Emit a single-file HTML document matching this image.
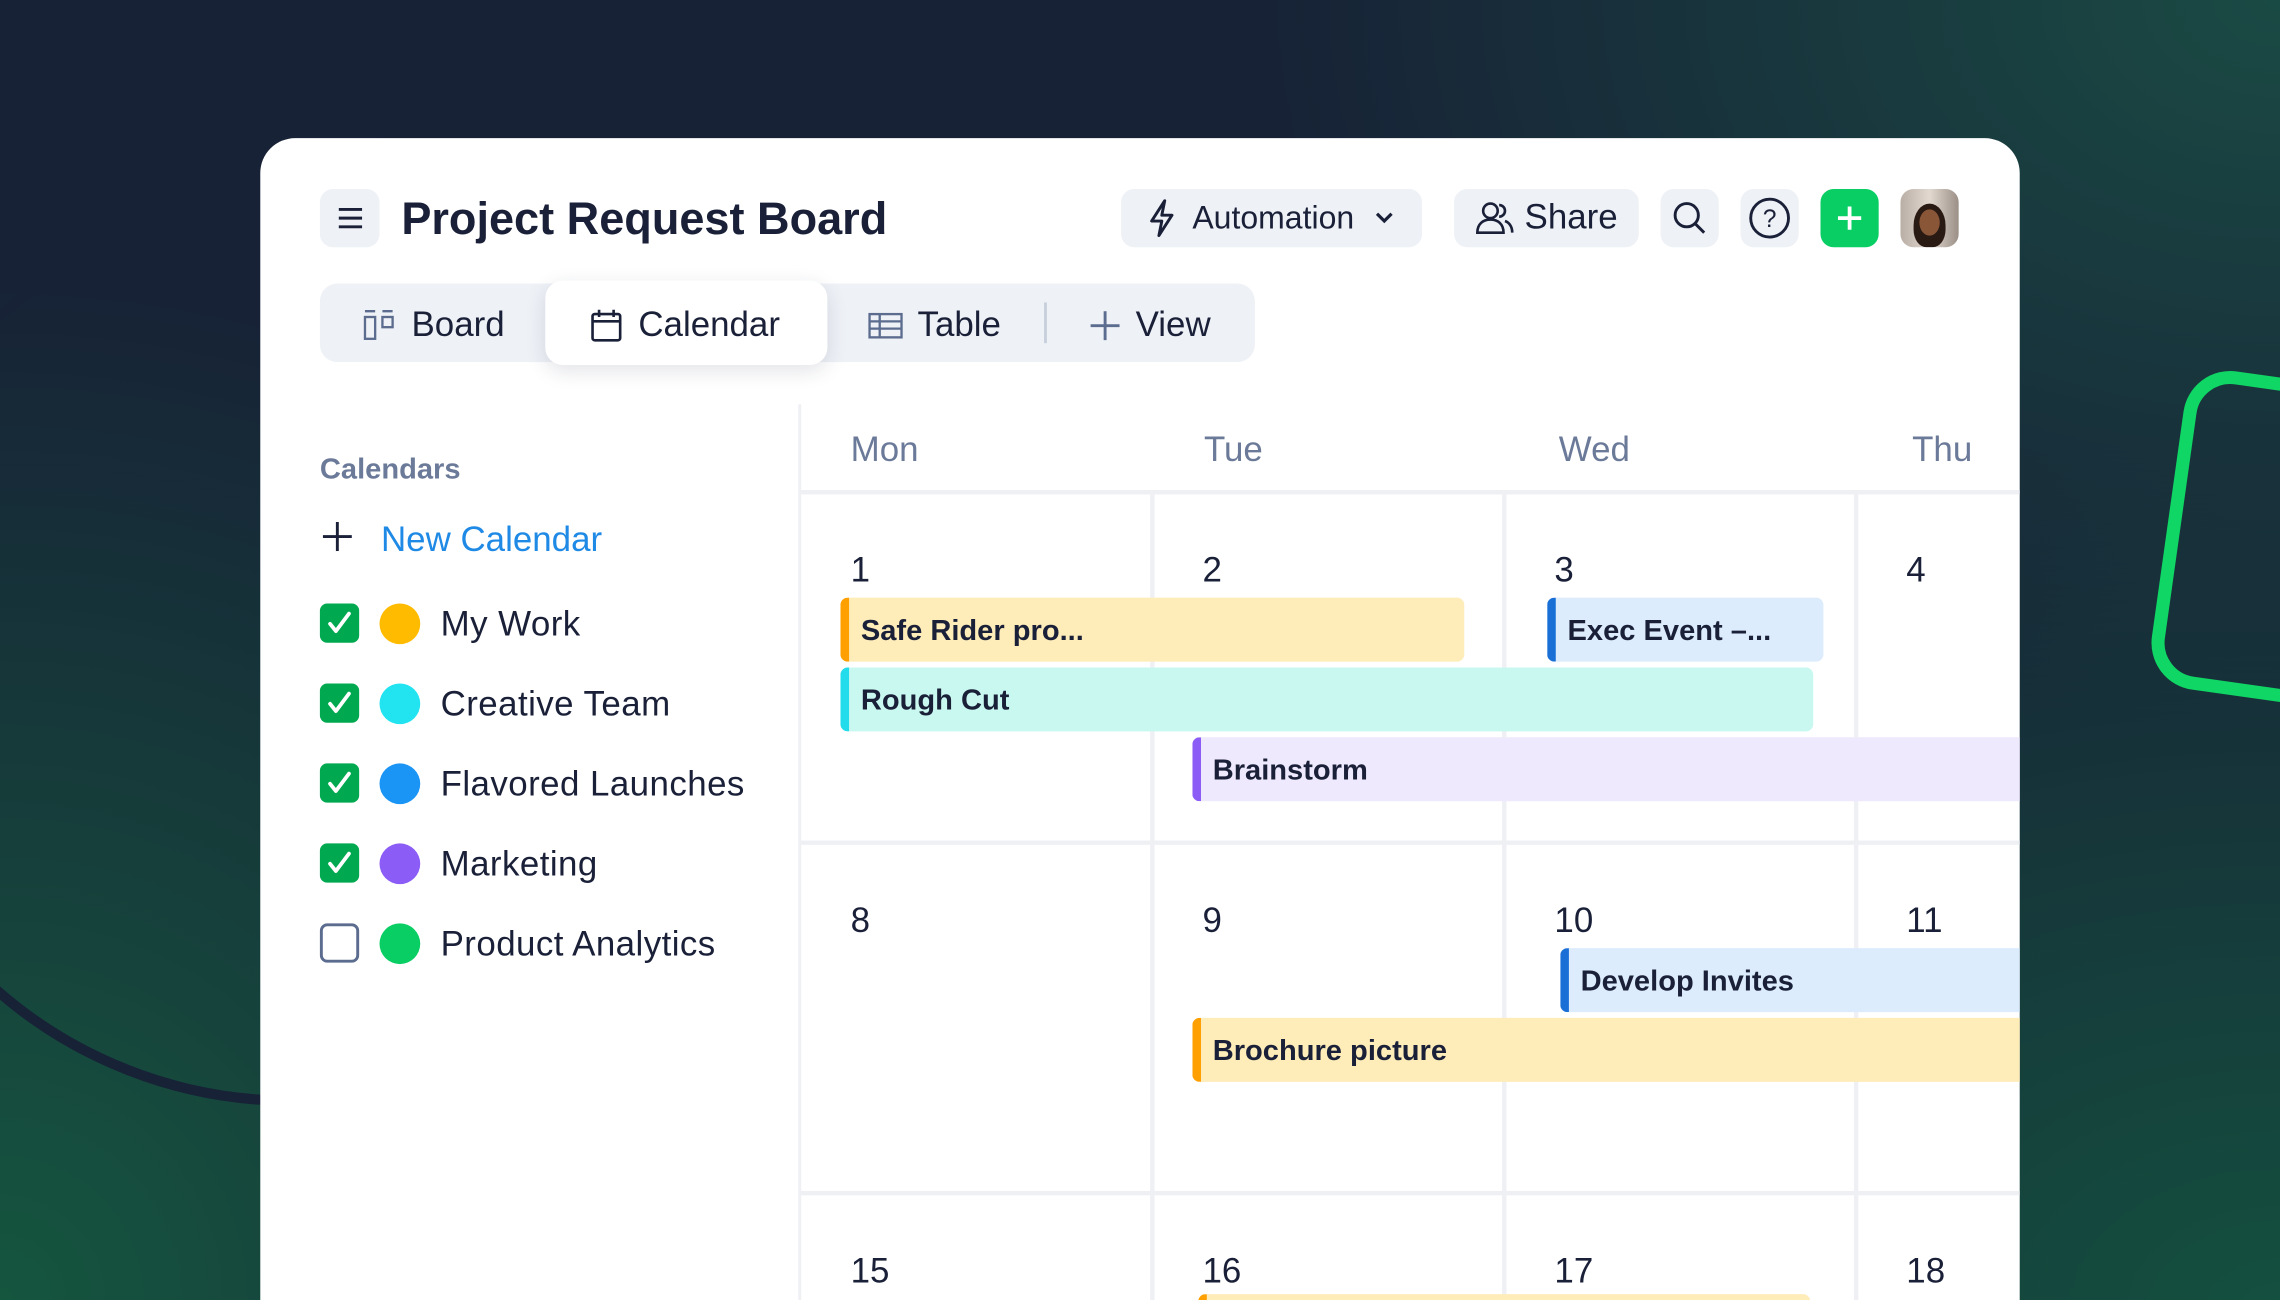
<!DOCTYPE html>
<html><head><meta charset="utf-8"><style>
*{margin:0;padding:0;box-sizing:border-box}
html,body{width:2280px;height:1300px;overflow:hidden}
body{background:#172236;font-family:"Liberation Sans",sans-serif;color:#1a2038}
#s{position:absolute;left:0;top:0;width:1568px;height:894px;transform:scale(1.45408,1.45414);transform-origin:0 0;overflow:hidden;
background:radial-gradient(ellipse 900px 600px at 1568px 900px,#14503f 0%,rgba(20,80,63,0) 100%),radial-gradient(ellipse 700px 700px at 0px 894px,#15563f 0%,rgba(21,86,63,0) 100%),radial-gradient(ellipse 700px 500px at 1568px 0px,#1a4a44 0%,rgba(26,74,68,0) 100%),#172236}
.a{position:absolute}
.card{left:179px;top:95px;width:1210px;height:799px;background:#fff;border-radius:24px 24px 0 0;overflow:hidden}
.btn{position:absolute;background:#eef1f6;border-radius:9px;height:40px;top:35px;display:flex;align-items:center;justify-content:center;font-size:22px;color:#1a2038}
.tabs{left:41px;top:100px;width:643px;height:54px;background:#eef1f6;border-radius:12px}
.tab{position:absolute;top:2px;height:54px;display:flex;align-items:center;font-size:24px;color:#1a2038}
.cb{position:absolute;left:41px;width:27px;height:27px;border-radius:5px;background:#00a84f}
.dot{position:absolute;left:82px;width:28px;height:28px;border-radius:50%}
.lbl{position:absolute;left:124px;font-size:24px;color:#1a2038;letter-spacing:.3px}
.vl{position:absolute;width:3px;background:#eef0f4}
.hl{position:absolute;height:3px;background:#eef0f4;left:371px;width:840px}
.dn{position:absolute;font-size:24px;color:#1a2038}
.dh{position:absolute;top:201px;font-size:24px;color:#6b7a99}
.ev{position:absolute;height:44px;border-radius:5px;border-left:6px solid;font-weight:bold;font-size:20px;display:flex;align-items:center;padding-left:8px;padding-top:3px;color:#1a2038;white-space:nowrap;overflow:hidden}
.y{background:#feecb9;border-color:#ff9f00}.b{background:#dcecfd;border-color:#1a6fd6}.c{background:#c9f8f0;border-color:#22dcec}.p{background:#efe9fd;border-color:#8b5cf6}
</style></head><body><div id="s">
<svg class="a" style="left:0;top:0" width="1568" height="894">
<circle cx="200" cy="450" r="307" fill="none" stroke="#172236" stroke-width="7"/>
<rect x="1510" y="256" width="260" height="212" rx="28" fill="none" stroke="#0fd664" stroke-width="9" transform="rotate(8 1510 256)"/>
</svg>
<div class="a card">
 <div class="btn" style="left:41px;width:41px"><svg width="20" height="16"><path d="M2 2h16M2 8h16M2 14h16" stroke="#1a2038" stroke-width="2"/></svg></div>
 <div class="a" style="left:97px;top:38px;font-size:31px;font-weight:bold;letter-spacing:0px">Project Request Board</div>
 <div class="btn" style="left:592px;width:207px;justify-content:flex-start;padding-left:18px"><svg width="20" height="26" style="margin-right:11px"><path d="M12 1L3 15h7l-2 10 9-14h-7z" fill="none" stroke="#1a2038" stroke-width="2" stroke-linejoin="round"/></svg>Automation<svg width="14" height="10" style="margin-left:14px"><path d="M2 2l5 5 5-5" fill="none" stroke="#1a2038" stroke-width="2.2"/></svg></div>
 <div class="btn" style="left:821px;width:127px;font-size:24px"><svg width="28" height="24" style="margin-right:6px"><circle cx="11" cy="7" r="5" fill="none" stroke="#1a2038" stroke-width="1.8"/><path d="M2 22c0-6 4-9 9-9s9 3 9 9zM17 3a4 4 0 0 1 0 8M21 14c3 1 5 4 5 8" fill="none" stroke="#1a2038" stroke-width="1.8"/></svg>Share</div>
 <div class="btn" style="left:963px;width:40px"><svg width="26" height="26"><circle cx="11" cy="11" r="8" fill="none" stroke="#1a2038" stroke-width="2"/><path d="M17 17l6 6" stroke="#1a2038" stroke-width="2"/></svg></div>
 <div class="btn" style="left:1018px;width:40px"><svg width="30" height="30"><circle cx="15" cy="15" r="13" fill="none" stroke="#1a2038" stroke-width="2"/><text x="15" y="21" font-size="17" text-anchor="middle" fill="#1a2038" font-family="Liberation Sans">?</text></svg></div>
 <div class="btn" style="left:1073px;width:40px;background:#08ce63"><svg width="20" height="20"><path d="M10 2v16M2 10h16" stroke="#fff" stroke-width="2.6"/></svg></div>
 <div class="btn" style="left:1128px;width:40px;background:linear-gradient(90deg,#b9aea5,#e2d9d0 50%,#9b8f86);overflow:hidden"><div style="width:22px;height:30px;border-radius:50% 50% 40% 40%;background:#2a1a14;margin-top:10px;position:relative"><div style="position:absolute;left:4px;top:4px;width:14px;height:18px;border-radius:50%;background:#8a5638"></div></div></div>
 <div class="a tabs">
  <div class="tab" style="left:30px"><svg width="22" height="22" style="margin-right:11px"><rect x="1" y="5" width="7" height="15" fill="none" stroke="#5b6c8f" stroke-width="1.6"/><rect x="13" y="5" width="7" height="7" fill="none" stroke="#5b6c8f" stroke-width="1.6"/><path d="M1 1h7M13 1h7" stroke="#5b6c8f" stroke-width="1.6"/></svg>Board</div>
  <div class="a" style="left:155px;top:-2px;width:194px;height:58px;background:#fff;border-radius:12px;box-shadow:0 4px 14px rgba(30,40,70,.13)"></div>
  <div class="tab" style="left:186px"><svg width="22" height="24" style="margin-right:11px"><rect x="1.5" y="4" width="19" height="18" rx="1.5" fill="none" stroke="#1a2038" stroke-width="1.8"/><path d="M1.5 9h19M6 1v5M16 1v5" stroke="#1a2038" stroke-width="1.8"/></svg>Calendar</div>
  <div class="tab" style="left:377px"><svg width="24" height="20" style="margin-right:10px"><rect x="1" y="2" width="22" height="16" fill="none" stroke="#5b6c8f" stroke-width="1.6"/><path d="M1 7h22M1 12h22M8 2v16" stroke="#5b6c8f" stroke-width="1.6"/></svg>Table</div>
  <div class="a" style="left:498px;top:13px;width:2px;height:28px;background:#c8d0dd"></div>
  <div class="tab" style="left:530px"><svg width="20" height="20" style="margin-right:11px"><path d="M10 0v20M0 10h20" stroke="#5b6c8f" stroke-width="2"/></svg>View</div>
 </div>
 <div class="a" style="left:41px;top:217px;font-size:20px;font-weight:bold;color:#6b7a99">Calendars</div>
 <svg class="a" style="left:43px;top:264px" width="20" height="20"><path d="M10 0v20M0 10h20" stroke="#1a2038" stroke-width="2"/></svg>
 <div class="a" style="left:83px;top:263px;font-size:24px;color:#1f8ae6">New Calendar</div>
 <div class="cb" style="top:320px"></div><div class="dot" style="top:320px;background:#ffbb00"></div><div class="lbl" style="top:321px">My Work</div>
 <div class="cb" style="top:375px"></div><div class="dot" style="top:375px;background:#22e4f0"></div><div class="lbl" style="top:376px">Creative Team</div>
 <div class="cb" style="top:430px"></div><div class="dot" style="top:430px;background:#1a95f5"></div><div class="lbl" style="top:431px">Flavored Launches</div>
 <div class="cb" style="top:485px"></div><div class="dot" style="top:485px;background:#8b5cf6"></div><div class="lbl" style="top:486px">Marketing</div>
 <div class="cb" style="top:540px;background:#fff;border:2px solid #5b6c8f"></div><div class="dot" style="top:540px;background:#08ce63"></div><div class="lbl" style="top:541px">Product Analytics</div>
 <svg class="a" style="left:41px;top:320px" width="27" height="200"><g fill="none" stroke="#fff" stroke-width="2.6" stroke-linecap="round" stroke-linejoin="round"><path d="M7 14l4 5 9-12"/><path d="M7 69l4 5 9-12"/><path d="M7 124l4 5 9-12"/><path d="M7 179l4 5 9-12"/></g></svg>
 <div class="vl" style="left:370px;top:183px;height:700px;width:2px"></div>
 <div class="dh" style="left:406px">Mon</div><div class="dh" style="left:649px">Tue</div><div class="dh" style="left:893px">Wed</div><div class="dh" style="left:1136px">Thu</div>
 <div class="hl" style="top:242px"></div><div class="hl" style="top:483px"></div><div class="hl" style="top:724px"></div>
 <div class="vl" style="left:612px;top:245px;height:600px"></div><div class="vl" style="left:854px;top:245px;height:600px"></div><div class="vl" style="left:1096px;top:245px;height:600px"></div>
 <div class="dn" style="left:406px;top:284px">1</div><div class="dn" style="left:648px;top:284px">2</div><div class="dn" style="left:890px;top:284px">3</div><div class="dn" style="left:1132px;top:284px">4</div>
 <div class="dn" style="left:406px;top:525px">8</div><div class="dn" style="left:648px;top:525px">9</div><div class="dn" style="left:890px;top:525px">10</div><div class="dn" style="left:1132px;top:525px">11</div>
 <div class="dn" style="left:406px;top:766px">15</div><div class="dn" style="left:648px;top:766px">16</div><div class="dn" style="left:890px;top:766px">17</div><div class="dn" style="left:1132px;top:766px">18</div>
 <div class="ev y" style="left:399px;top:316px;width:429px">Safe Rider pro...</div>
 <div class="ev b" style="left:885px;top:316px;width:190px">Exec Event –...</div>
 <div class="ev c" style="left:399px;top:364px;width:669px">Rough Cut</div>
 <div class="ev p" style="left:641px;top:412px;width:580px">Brainstorm</div>
 <div class="ev b" style="left:894px;top:557px;width:330px">Develop Invites</div>
 <div class="ev y" style="left:641px;top:605px;width:580px">Brochure picture</div>
 <div class="ev y" style="left:645px;top:795px;width:421px"></div>
</div>
</div></body></html>
